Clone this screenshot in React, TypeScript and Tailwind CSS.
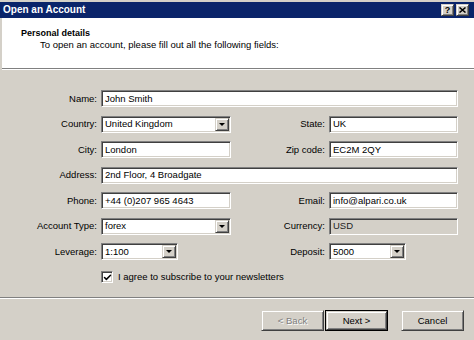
import { Check } from 'lucide-react'

const sunken =
  'border border-t-[#808080] border-l-[#808080] border-b-white border-r-white shadow-[inset_1px_1px_0_#404040,inset_-1px_-1px_0_#d4d0c8]'
const raised =
  'border border-t-[#d4d0c8] border-l-[#d4d0c8] border-b-[#404040] border-r-[#404040] shadow-[inset_1px_1px_0_#fff,inset_-1px_-1px_0_#808080] bg-[#d4d0c8]'

function Field({ value, width, disabled = false }: { value: string; width: string; disabled?: boolean }) {
  return (
    <div
      className={`flex h-[17px] items-center pl-[3px] ${width} ${sunken} ${
        disabled ? 'bg-[#d4d0c8] text-[#222]' : 'bg-white'
      }`}
    >
      {value}
    </div>
  )
}

function Select({ value, width }: { value: string; width: string }) {
  return (
    <div className={`flex h-[17px] items-stretch bg-white ${width} ${sunken}`}>
      <span className="flex flex-1 items-center pl-[3px]">{value}</span>
      <span className={`m-px flex w-[14px] items-center justify-center ${raised}`}>
        <span className="h-0 w-0 border-x-[3px] border-t-[3px] border-x-transparent border-t-black" />
      </span>
    </div>
  )
}

function Label({ text, width }: { text: string; width: string }) {
  return <span className={`shrink-0 text-right ${width}`}>{text}</span>
}

function Button({ children, primary = false, disabled = false }: { children: string; primary?: boolean; disabled?: boolean }) {
  return (
    <div className={`h-[21px] w-[63px] ${primary ? 'border border-black' : ''}`}>
      <div
        className={`flex h-full w-full items-center justify-center ${raised} ${
          disabled ? 'text-[#808080] [text-shadow:1px_1px_0_#fff]' : 'text-black'
        }`}
      >
        {children}
      </div>
    </div>
  )
}

export default function App() {
  return (
    <div className="flex h-[340px] w-[474px] flex-col overflow-hidden bg-[#d4d0c8] pt-[2px] font-['Liberation_Sans',Arial,sans-serif] text-[9.5px] leading-[12px] text-black">
      {/* caption */}
      <div className="flex h-[16px] items-center bg-[#0a246a] pl-[3px] pr-[5px]">
        <span className="flex-1 text-[10px] font-bold text-white">Open an Account</span>
        <div className="flex gap-[2px]">
          <span className={`flex h-[12px] w-[13px] items-center justify-center text-[9px] font-bold leading-none ${raised}`}>?</span>
          <span className={`flex h-[12px] w-[13px] items-center justify-center ${raised}`}>
            <svg width="7" height="6" viewBox="0 0 7 6">
              <path d="M0.5 0.5 L6.5 5.5 M6.5 0.5 L0.5 5.5" stroke="black" strokeWidth="1.5" />
            </svg>
          </span>
        </div>
      </div>

      {/* header */}
      <div className="ml-[2px] h-[52px] border-b border-b-white bg-white">
        <div className="h-[51px] border-b border-b-[#808080] pl-[19px] pt-[9px]">
          <div className="text-[9px] font-bold">Personal details</div>
          <div className="pl-[19px]">To open an account, please fill out all the following fields:</div>
        </div>
      </div>

      {/* form */}
      <div className="flex h-[227px] flex-col gap-[8.5px] pt-[20px]">
        <div className="flex items-center gap-[4px]">
          <Label text="Name:" width="w-[97px]" />
          <Field value="John Smith" width="w-[357px]" />
        </div>
        <div className="flex items-center gap-[4px]">
          <Label text="Country:" width="w-[97px]" />
          <Select value="United Kingdom" width="w-[130px]" />
          <Label text="State:" width="w-[90px]" />
          <Field value="UK" width="w-[129px]" />
        </div>
        <div className="flex items-center gap-[4px]">
          <Label text="City:" width="w-[97px]" />
          <Field value="London" width="w-[130px]" />
          <Label text="Zip code:" width="w-[90px]" />
          <Field value="EC2M 2QY" width="w-[129px]" />
        </div>
        <div className="flex items-center gap-[4px]">
          <Label text="Address:" width="w-[97px]" />
          <Field value="2nd Floor, 4 Broadgate" width="w-[357px]" />
        </div>
        <div className="flex items-center gap-[4px]">
          <Label text="Phone:" width="w-[97px]" />
          <Field value="+44 (0)207 965 4643" width="w-[130px]" />
          <Label text="Email:" width="w-[90px]" />
          <Field value="info@alpari.co.uk" width="w-[129px]" />
        </div>
        <div className="flex items-center gap-[4px]">
          <Label text="Account Type:" width="w-[97px]" />
          <Select value="forex" width="w-[130px]" />
          <Label text="Currency:" width="w-[90px]" />
          <Field value="USD" width="w-[129px]" disabled />
        </div>
        <div className="flex items-center gap-[4px]">
          <Label text="Leverage:" width="w-[97px]" />
          <Select value="1:100" width="w-[77px]" />
          <span className="w-[49px]" />
          <Label text="Deposit:" width="w-[90px]" />
          <Select value="5000" width="w-[77px]" />
        </div>
        <div className="flex h-[17px] items-center gap-[5px] pl-[101px]">
          <span className={`flex h-[12px] w-[12px] items-center justify-center bg-white ${sunken}`}>
            <Check size={9} strokeWidth={4} className="text-black" />
          </span>
          <span>I agree to subscribe to your newsletters</span>
        </div>
      </div>

      {/* separator */}
      <div className="h-[2px] border-t border-t-[#808080] border-b border-b-white" />

      {/* buttons */}
      <div className="flex pl-[261px] pt-[11px]">
        <Button disabled>&lt; Back</Button>
        <span className="w-[1px]" />
        <Button primary>Next &gt;</Button>
        <span className="w-[13px]" />
        <Button>Cancel</Button>
      </div>
    </div>
  )
}
